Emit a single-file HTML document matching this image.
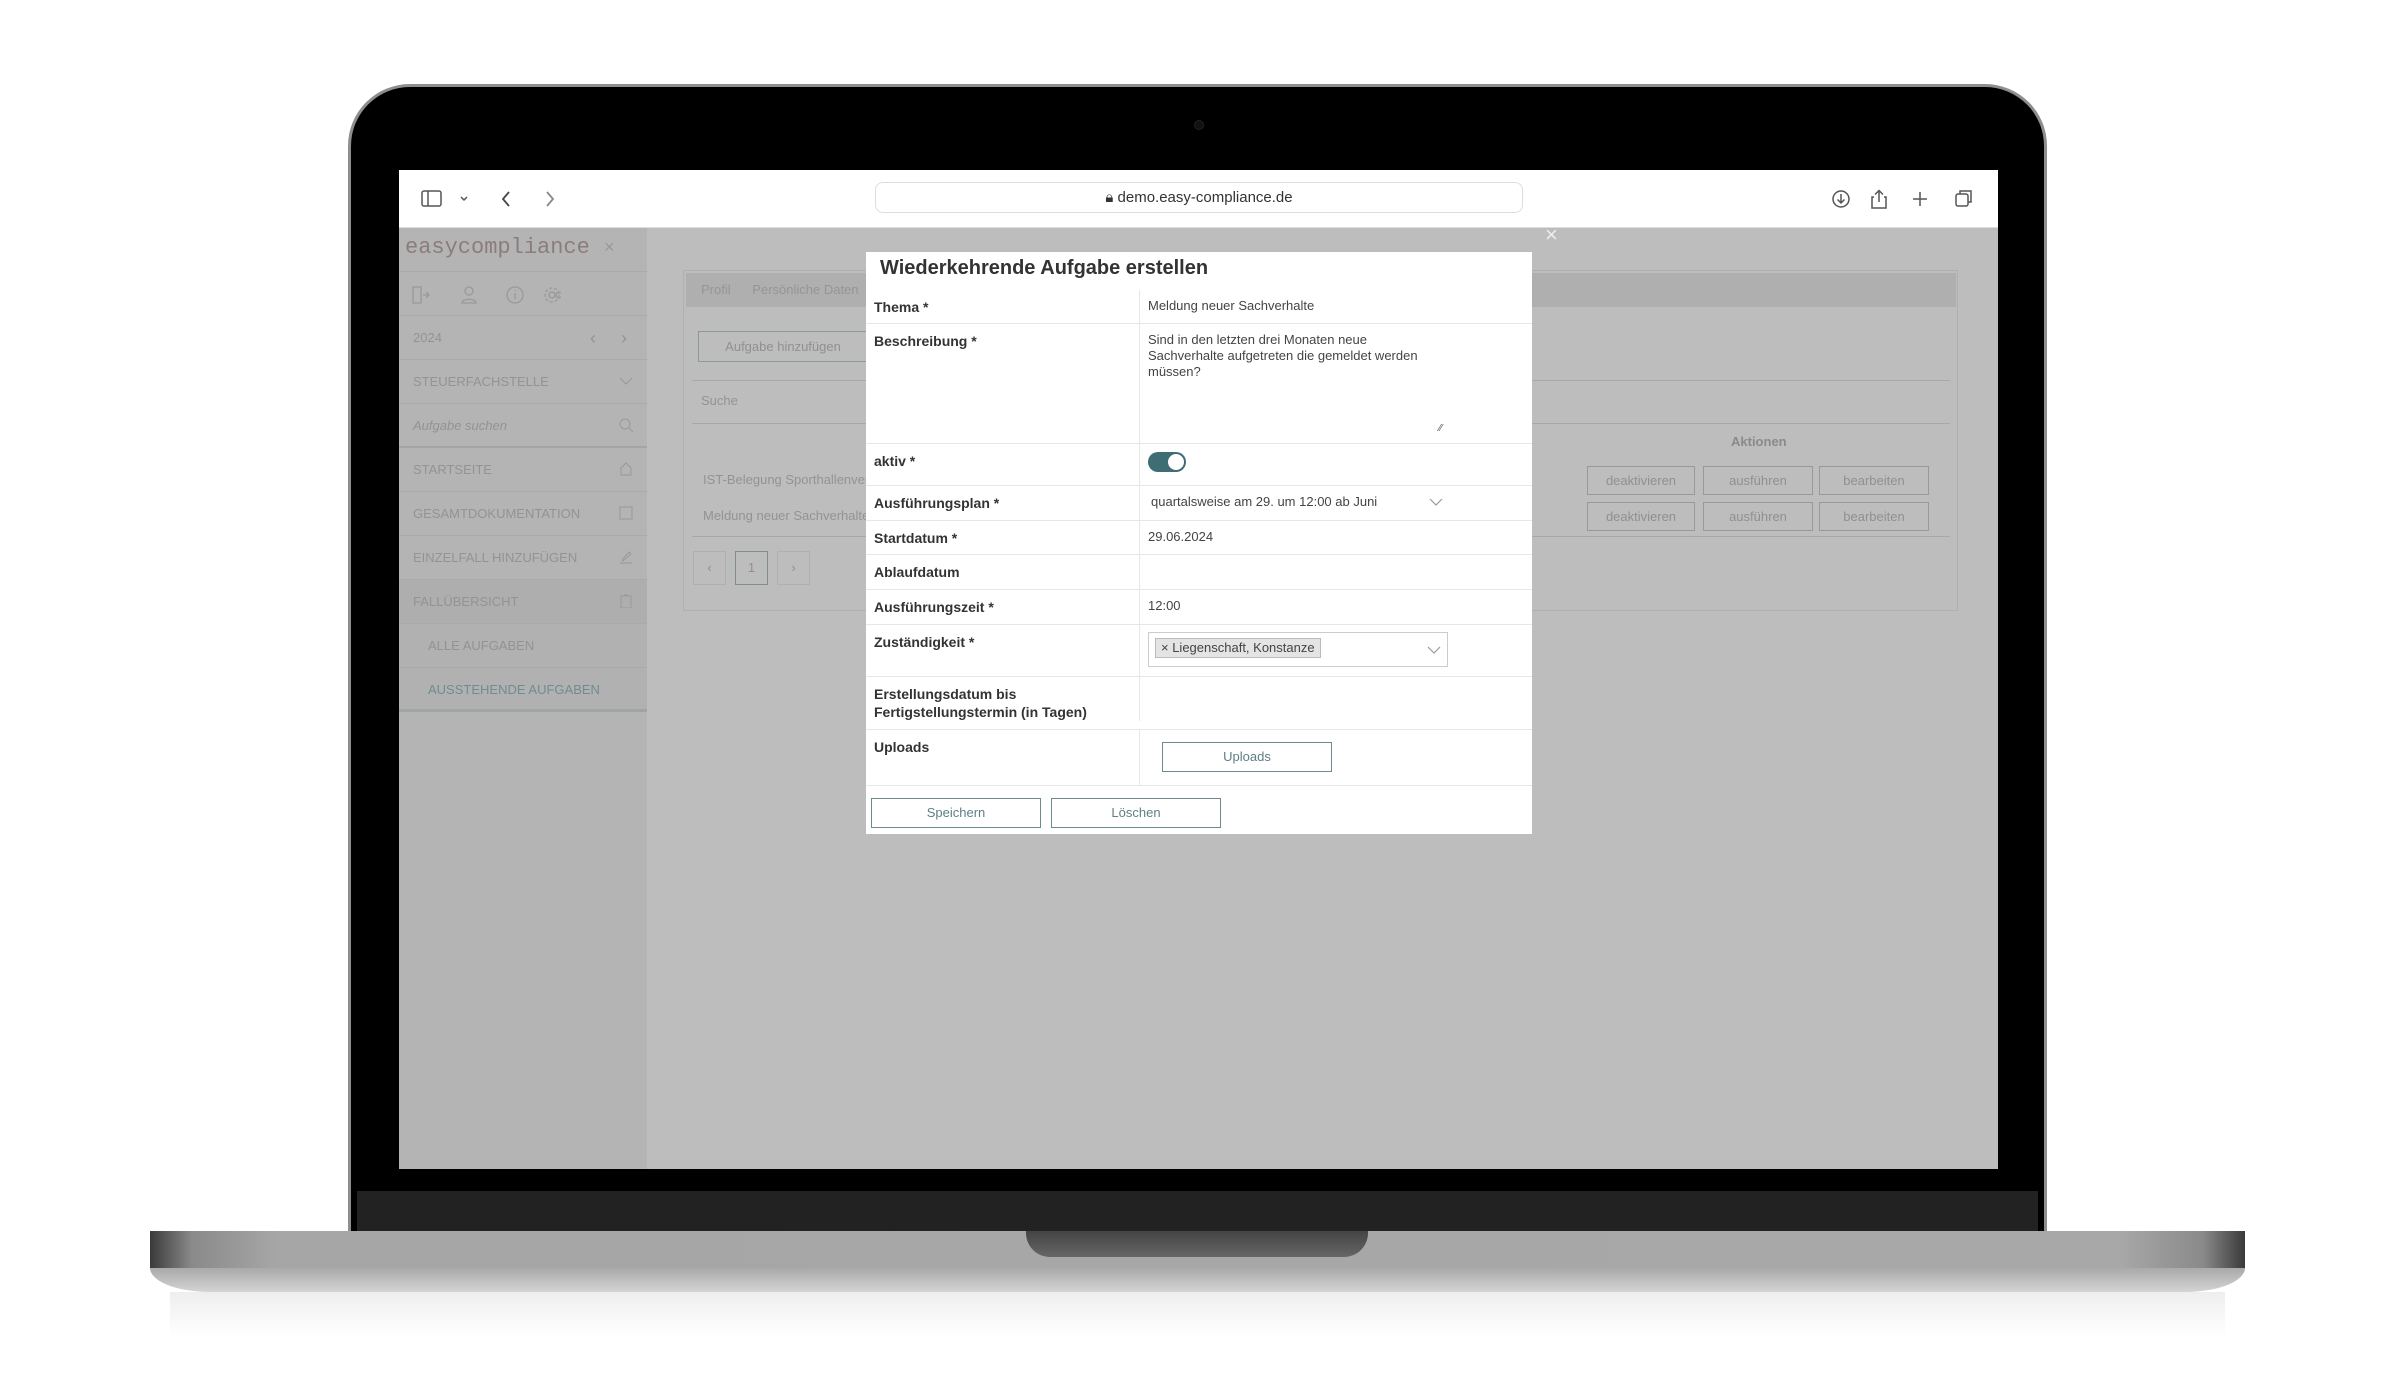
<!DOCTYPE html>
<html><head><meta charset="utf-8"><style>
*{box-sizing:border-box;margin:0;padding:0}
body{width:2395px;height:1377px;background:#fff;position:relative;overflow:hidden;font-family:"Liberation Sans",sans-serif}
.a{position:absolute}
.bez{left:348px;top:84px;width:1699px;height:1160px;background:#000;border-radius:62px 62px 0 0;border:3px solid #8e8e8e;border-bottom:none}
.chin{left:357px;top:1191px;width:1681px;height:40px;background:#222}
.base{left:150px;top:1231px;width:2095px;height:37px;background:linear-gradient(90deg,#3a3a3a 0%,#8a8a8a 2%,#a6a6a6 6%,#a8a8a8 94%,#8a8a8a 98%,#3a3a3a 100%)}
.lip{left:150px;top:1268px;width:2095px;height:24px;background:linear-gradient(#a9a9a9,#d4d4d4);border-radius:0 0 60px 60px/0 0 24px 24px}
.refl{left:170px;top:1292px;width:2055px;height:45px;background:linear-gradient(#eeeeee,#fff)}
.notch{left:1026px;top:1231px;width:342px;height:26px;background:linear-gradient(#444,#666);border-radius:0 0 24px 24px}
.screen{left:399px;top:170px;width:1599px;height:999px;background:#bdbdbd;overflow:hidden}
.tb{left:0;top:0;width:1599px;height:58px;background:#fff;border-bottom:1px solid #ddd}
.url{left:476px;top:12px;width:648px;height:31px;border:1px solid #ddd;border-radius:8px;font-size:15px;color:#333;text-align:center;line-height:29px}
.side{left:0;top:58px;width:248px;height:941px;background:#b4b4b4}
.si{position:absolute;left:0;width:248px;height:44px;border-bottom:1px solid #aaa;font-size:13px;color:#939393;padding-left:14px;line-height:44px}
.g{color:#939393}
.btn{position:absolute;border:1px solid #999;font-size:13px;color:#909090;text-align:center}
.modal{left:866px;top:252px;width:666px;height:582px;background:#fff}
.row{position:absolute;left:0;width:666px;border-bottom:1.5px solid #e6e6e6}
.lb{position:absolute;left:8px;top:8px;font-size:14px;font-weight:bold;color:#333;line-height:18px}
.vl{position:absolute;left:282px;top:8px;font-size:13px;color:#444;line-height:16px}
.vd{position:absolute;left:273px;top:0;bottom:0;border-left:1.5px solid #e6e6e6}
.mb{position:absolute;border:1.5px solid #6e8a8f;font-size:13px;color:#5e7f85;text-align:center;height:30px;line-height:27px;background:#fff}
.ic{position:absolute;right:14px;top:14px}
</style></head><body>
<div class="a bez"></div>
<div class="a" style="left:1194px;top:120px;width:10px;height:10px;border-radius:50%;background:#111;border:1px solid #222"></div>
<div class="a chin"></div>
<div class="a base"></div>
<div class="a notch"></div>
<div class="a lip"></div>
<div class="a refl"></div>

<div class="a screen">
 <div class="a tb">
  <svg class="a" style="left:22px;top:18px" width="80" height="22" viewBox="0 0 80 22" fill="none" stroke="#555" stroke-width="1.5"><rect x="1" y="3" width="19" height="15" rx="2"/><line x1="7" y1="3" x2="7" y2="18"/><path d="M40 9l3 3 3-3"/></svg>
  <svg class="a" style="left:98px;top:18px" width="70" height="22" viewBox="0 0 70 22" fill="none" stroke="#444" stroke-width="1.8"><path d="M12 4l-6 7 6 7"/><path d="M50 4l6 7-6 7" stroke="#888"/></svg>
  <div class="a url">🔒︎ demo.easy-compliance.de</div>
  <svg class="a" style="left:1430px;top:16px" width="160" height="26" viewBox="0 0 160 26" fill="none" stroke="#555" stroke-width="1.5"><circle cx="12" cy="13" r="8"/><path d="M12 8v9M8.5 13.5l3.5 3.5 3.5-3.5"/><path d="M50 5v11M46 8.5l4-4 4 4M45 11h-2v11h14V11h-2"/><path d="M91 6v14M84 13h14"/><rect x="127" y="8" width="12" height="12" rx="2"/><path d="M131 8V5h11v11h-3"/></svg>
 </div>
 <div class="a side">
  <div class="si" style="top:0;height:44px;font-family:'Liberation Mono',monospace;font-size:22px;color:#8b7d7b;line-height:40px;padding-left:6px">easycompliance<span style="font-size:18px;color:#999;margin-left:14px">×</span></div>
  <div class="si" style="top:44px">
   <svg class="a" style="left:12px;top:13px" width="150" height="20" fill="none" stroke="#999" stroke-width="1.3"><path d="M2 2h8v16H2zM12 10h6M15 7l3 3-3 3"/><circle cx="58" cy="6" r="4"/><path d="M51 18c0-5 14-5 14 0z"/><circle cx="104" cy="10" r="8"/><path d="M104 8v6M104 5v1"/><circle cx="148" cy="10" r="3"/></svg>
   <svg class="a" style="left:143px;top:13px" width="20" height="20" fill="none" stroke="#999" stroke-width="1.3"><circle cx="10" cy="10" r="3"/><circle cx="10" cy="10" r="7" stroke-dasharray="3 2"/></svg>
  </div>
  <div class="si" style="top:88px">2024<span style="float:right;margin-right:20px;font-size:18px">‹ &nbsp;&nbsp;&nbsp; ›</span></div>
  <div class="si" style="top:132px">STEUERFACHSTELLE<svg class="ic" width="14" height="14" fill="none" stroke="#999"><path d="M1 4l6 6 6-6"/></svg></div>
  <div class="si" style="top:176px;font-style:italic;border-bottom:2px solid #a4a4a4">Aufgabe suchen<svg class="ic" width="14" height="14" fill="none" stroke="#999"><circle cx="6" cy="6" r="5"/><path d="M10 10l4 4"/></svg></div>
  <div class="si" style="top:220px">STARTSEITE<svg class="ic" width="14" height="14" fill="none" stroke="#999"><path d="M2 13V6l5-5 5 5v7z"/></svg></div>
  <div class="si" style="top:264px">GESAMTDOKUMENTATION<svg class="ic" width="14" height="14" fill="none" stroke="#999"><rect x="1" y="1" width="12" height="12"/></svg></div>
  <div class="si" style="top:308px">EINZELFALL HINZUFÜGEN<svg class="ic" width="14" height="14" fill="none" stroke="#999"><path d="M3 10l7-8 2 2-8 7zM1 13h12"/></svg></div>
  <div class="si" style="top:352px;background:#aeaeae">FALLÜBERSICHT<svg class="ic" width="14" height="14" fill="none" stroke="#999"><rect x="2" y="2" width="10" height="12"/><path d="M5 1h4"/></svg></div>
  <div class="si" style="top:396px;padding-left:29px;background:#b1b1b1">ALLE AUFGABEN</div>
  <div class="si" style="top:440px;padding-left:29px;color:#718c90;background:#b1b1b1;border-bottom:3px solid #9fa5a6">AUSSTEHENDE AUFGABEN</div>
 </div>
 <div class="a" style="left:284px;top:100px;width:1275px;height:341px;border:1px solid #b0b0b0"></div>
 <div class="a" style="left:287px;top:103px;width:1270px;height:34px;background:#afafaf;font-size:13px;color:#959595;line-height:34px;padding-left:15px">Profil &nbsp;&nbsp;&nbsp;&nbsp; Persönliche Daten</div>
 <div class="btn" style="left:299px;top:161px;width:170px;height:31px;line-height:29px;border-color:#8a9a9c">Aufgabe hinzufügen</div>
 <div class="a" style="left:293px;top:210px;width:1258px;border-top:1px solid #a8a8a8"></div>
 <div class="a g" style="left:302px;top:223px;font-size:13px">Suche</div>
 <div class="a" style="left:293px;top:253px;width:1258px;border-top:1px solid #a8a8a8"></div>
 <div class="a" style="left:1332px;top:264px;font-size:13px;font-weight:bold;color:#8a8a8a">Aktionen</div>
 <div class="a g" style="left:304px;top:302px;font-size:13px">IST-Belegung Sporthallenverwaltung</div>
 <div class="a g" style="left:304px;top:338px;font-size:13px">Meldung neuer Sachverhalte</div>
 <div class="btn" style="left:1188px;top:296px;width:108px;height:29px;line-height:27px">deaktivieren</div>
 <div class="btn" style="left:1304px;top:296px;width:110px;height:29px;line-height:27px">ausführen</div>
 <div class="btn" style="left:1420px;top:296px;width:110px;height:29px;line-height:27px">bearbeiten</div>
 <div class="btn" style="left:1188px;top:332px;width:108px;height:29px;line-height:27px">deaktivieren</div>
 <div class="btn" style="left:1304px;top:332px;width:110px;height:29px;line-height:27px">ausführen</div>
 <div class="btn" style="left:1420px;top:332px;width:110px;height:29px;line-height:27px">bearbeiten</div>
 <div class="a" style="left:293px;top:366px;width:1258px;border-top:1px solid #a8a8a8"></div>
 <div class="btn" style="left:294px;top:381px;width:33px;height:34px;line-height:32px;border-color:#b0b0b0">‹</div>
 <div class="btn" style="left:336px;top:381px;width:33px;height:34px;line-height:32px;border-color:#7e8d8f">1</div>
 <div class="btn" style="left:378px;top:381px;width:33px;height:34px;line-height:32px;border-color:#b0b0b0">›</div>
 <div class="a" style="left:1146px;top:52px;font-size:22px;color:#eee">×</div>
</div>

<div class="a modal">
 <div class="a" style="left:14px;top:5px;font-size:20px;font-weight:bold;color:#333">Wiederkehrende Aufgabe erstellen</div>
 <div class="row" style="top:38px;height:34px"><div class="lb">Thema *</div><div class="vd"></div><div class="vl">Meldung neuer Sachverhalte</div></div>
 <div class="row" style="top:72px;height:120px"><div class="lb">Beschreibung *</div><div class="vd"></div><div class="vl" style="width:280px">Sind in den letzten drei Monaten neue Sachverhalte aufgetreten die gemeldet werden müssen?</div><div class="a" style="left:573px;top:99px;font-size:10px;color:#555">⁄⁄</div></div>
 <div class="row" style="top:192px;height:42px"><div class="lb">aktiv *</div><div class="vd"></div><div class="a" style="left:282px;top:8px;width:38px;height:20px;border-radius:10px;background:#3f6d74"><div class="a" style="left:20px;top:2px;width:16px;height:16px;border-radius:50%;background:#fff"></div></div></div>
 <div class="row" style="top:234px;height:35px"><div class="lb">Ausführungsplan *</div><div class="vd"></div><div class="vl" style="left:285px">quartalsweise am 29. um 12:00 ab Juni</div><svg class="a" style="left:563px;top:12px" width="14" height="9" fill="none" stroke="#999" stroke-width="1.2"><path d="M1 1l6 6 6-6"/></svg></div>
 <div class="row" style="top:269px;height:34px"><div class="lb">Startdatum *</div><div class="vd"></div><div class="vl">29.06.2024</div></div>
 <div class="row" style="top:303px;height:35px"><div class="lb">Ablaufdatum</div><div class="vd"></div></div>
 <div class="row" style="top:338px;height:35px"><div class="lb">Ausführungszeit *</div><div class="vd"></div><div class="vl">12:00</div></div>
 <div class="row" style="top:373px;height:52px"><div class="lb">Zuständigkeit *</div><div class="vd"></div>
  <div class="a" style="left:282px;top:7px;width:300px;height:35px;border:1.5px solid #ccc"><div class="a" style="left:6px;top:5px;height:20px;padding:0 5px;background:#e4e4e4;border:1px solid #bbb;font-size:13px;color:#444;line-height:18px">× Liegenschaft, Konstanze</div><svg class="a" style="left:278px;top:13px" width="14" height="9" fill="none" stroke="#999" stroke-width="1.2"><path d="M1 1l6 6 6-6"/></svg></div></div>
 <div class="row" style="top:425px;height:53px"><div class="lb">Erstellungsdatum bis<br>Fertigstellungstermin (in Tagen)</div><div class="vd" style="bottom:8px"></div></div>
 <div class="row" style="top:478px;height:56px"><div class="lb">Uploads</div><div class="vd"></div><div class="mb" style="left:296px;top:12px;width:170px">Uploads</div></div>
 <div class="mb" style="left:5px;top:546px;width:170px">Speichern</div>
 <div class="mb" style="left:185px;top:546px;width:170px">Löschen</div>
</div>
</body></html>
